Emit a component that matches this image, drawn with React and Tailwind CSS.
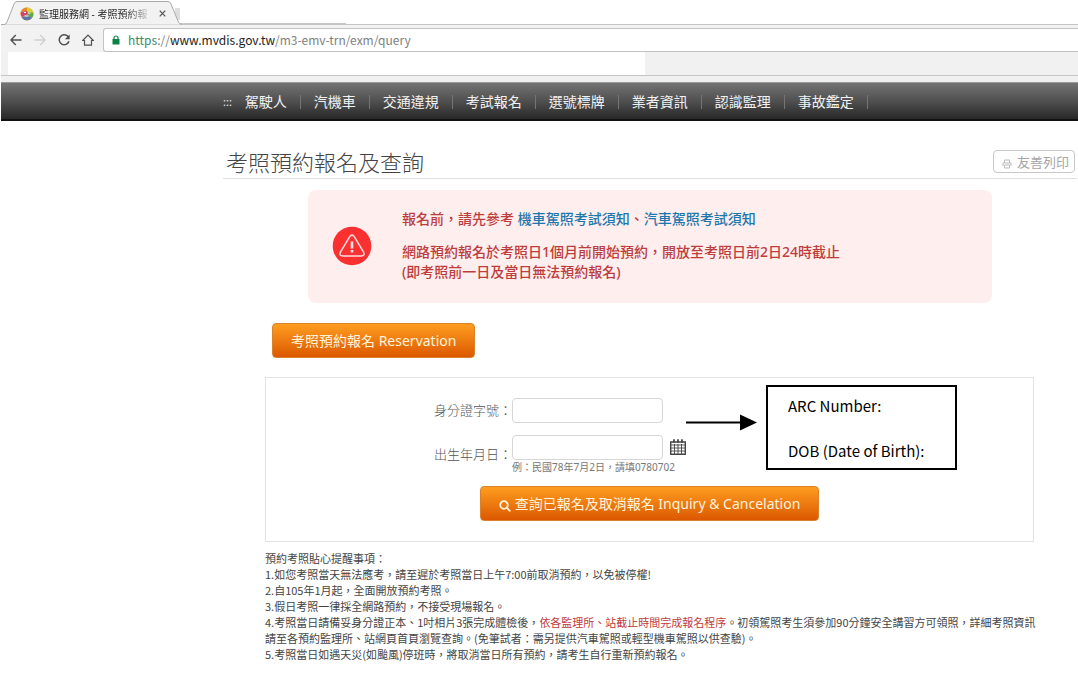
import React from "react";

const NAV = ["汽機車", "交通違規", "考試報名", "選號標牌", "業者資訊", "認識監理", "事故鑑定"];

function Favicon() {
  return (
    <svg viewBox="0 0 14 14" className="size-[14px] shrink-0" aria-hidden="true">
      <circle cx="7" cy="7" r="6.5" fill="#d9b23c" />
      <path d="M.8 5A6.5 6.5 0 0 1 7 .5v3Z" fill="#e8862f" />
      <path d="M7 .5A6.5 6.5 0 0 1 13.4 6L7 5Z" fill="#d8cf3a" />
      <path d="M.6 5.2 7 4l1 3-6 3A6.500 6.500 0 0 1 .6 5.200Z" fill="#d5406c" />
      <path d="M7 4.500 13.400 6a6.500 6.500 0 0 1-1.400 5L7 8Z" fill="#62ab4a" />
      <path d="M1.600 10.500 7 8l5 3a6.500 6.500 0 0 1-10.400-.5Z" fill="#5c74a8" />
      <path d="M4 5.500h2M8 6h2.500M4.500 9h4" stroke="#fff" strokeWidth="1" />
    </svg>
  );
}

function Toolbar() {
  return (
    <div className="flex h-[27px] items-end bg-[#f2f2f2] pl-[9px]">
      <div className="flex h-6 items-center gap-3 pr-[9px] text-[#505050]">
        <button aria-label="Back">
          <svg viewBox="0 0 12 12" className="size-3" fill="none" stroke="currentColor" strokeWidth="1.4">
            <path d="M11.500 6H1M5.800 1 .9 6l4.900 5" />
          </svg>
        </button>
        <button aria-label="Forward" className="text-[#cfcfcf]">
          <svg viewBox="0 0 12 12" className="size-3" fill="none" stroke="currentColor" strokeWidth="1.4">
            <path d="M.5 6H11M6.200 1l4.900 5-4.900 5" />
          </svg>
        </button>
        <button aria-label="Reload">
          <svg viewBox="0 0 12 12" className="size-3" fill="none" stroke="currentColor" strokeWidth="1.5">
            <path d="M10.300 2.800A5 5 0 1 0 11 7.300" />
            <path d="M11.700.4v4.800H6.900Z" fill="currentColor" stroke="none" />
          </svg>
        </button>
        <button aria-label="Home">
          <svg viewBox="0 0 12 12" className="size-3" fill="none" stroke="currentColor" strokeWidth="1.2">
            <path d="M.7 6.500 6 1.200l5.300 5.300H9.500v4.700h-7V6.500Z" />
          </svg>
        </button>
      </div>
      <div className="flex h-6 flex-1 items-center rounded-l-[3px] border border-r-0 border-[#c3c3c3] bg-white pl-2">
        <svg viewBox="0 0 8 10" className="mr-2 h-[10px] w-2" aria-hidden="true">
          <path d="M2 4.500V3a2 2 0 0 1 4 0v1.500" fill="none" stroke="#0b8043" strokeWidth="1.200" />
          <rect x=".5" y="4" width="7" height="5.500" rx=".5" fill="#0b8043" />
        </svg>
        <p className="font-['Noto_Sans_CJK_TC',sans-serif] text-[12px] leading-4 text-[#808080]">
          <span className="text-[#3d8b62]">https</span>://<span className="text-[#222]">www.mvdis.gov.tw</span>/m3-emv-trn/exm/query
        </p>
      </div>
    </div>
  );
}

function Browser() {
  return (
    <header>
      <div className="relative flex h-[25px] items-end">
        <div className="absolute bottom-0 left-0 h-px w-full bg-[#c4c4c4]" />
        <div className="absolute bottom-px left-[179px] h-px w-[166px] bg-[#c8c8c8]" />
        <div className="absolute top-2 left-[174px] h-3 w-[5px] bg-[#dedede]" />
        <div className="relative h-[25px] w-[182px]">
          <svg viewBox="0 0 182 25" className="absolute inset-0 h-[25px] w-[182px]" aria-hidden="true">
            <path d="M0 24.500h3q2 0 3-2.500L13 4q1-2.500 3-2.500h151q2 0 3 2.500l7 17q1 3.500 4 3.500Z" fill="#f2f2f2" />
            <path d="M0 24.500h3q2 0 3-2.500L13 4q1-2.500 3-2.500h151q2 0 3 2.500l7 17q1 3.500 4 3.500" fill="none" stroke="#a9a9a9" />
          </svg>
          <div className="relative flex h-[25px] items-center pt-[2px] pl-[19px]">
            <Favicon />
            <span className="ml-[5px] w-[112px] bg-gradient-to-r from-[#222] from-75% to-[#e4e4e4] bg-clip-text text-[10px] leading-4 whitespace-nowrap text-transparent">
              監理服務網 - 考照預約報
            </span>
            <button aria-label="Close tab" className="ml-2 text-[#505050]">
              <svg viewBox="0 0 7 7" className="size-[7px]" stroke="currentColor" strokeWidth="1.200">
                <path d="m.7.7 5.600 5.600M6.300.7.7 6.300" />
              </svg>
            </button>
          </div>
        </div>
      </div>
      <Toolbar />
      <div className="flex h-[23px] bg-[#f1f1f1] pl-[7px]">
        <div className="w-[637px] bg-white" />
      </div>
      <div className="h-[7px] border-t border-[#c6c6c6] bg-[#f0f0f0]" />
    </header>
  );
}

function Nav() {
  return (
    <nav className="flex h-[39px] items-center border-t border-b-2 border-t-[#9a9a9a] border-b-[#111] bg-gradient-to-b from-[#737373] via-[#505050] to-[#282828] pt-[2px] pl-[222px] text-[14px] leading-5 text-[#f2f2f2]">
      <a href="#nav" className="mr-[13px] text-[11px]">:::</a>
      <ul className="flex">
        <li className="pr-[13px]"><a href="#drivers">駕駛人</a></li>
        {NAV.map((t) => (
          <li key={t} className="flex items-center">
            <span className="mr-[13px] h-[14px] w-px bg-[#747474]" />
            <a href="#section" className="mr-[13px]">{t}</a>
          </li>
        ))}
        <li className="flex items-center"><span className="h-[14px] w-px bg-[#747474]" /></li>
      </ul>
    </nav>
  );
}

function Notice() {
  return (
    <section className="mt-[11px] mr-[85px] ml-[85px] flex h-[113px] items-center rounded-lg bg-[#ffeeee] pb-[2px] pl-6 text-[14px] leading-5 font-medium text-[#bd3d3d]">
      <svg viewBox="0 0 40 40" className="mr-[30px] size-10 shrink-0" aria-hidden="true">
        <circle cx="20" cy="20" r="19.300" fill="#fb3030" />
        <path d="M17.600 10.800q2.400-3.700 4.800 0l9.200 15.400q1.600 3.600-2.400 3.800H10.800q-4-.2-2.400-3.800Z" fill="none" stroke="#ffdede" strokeWidth="1.500" />
        <path d="M18.700 15.500h2.600v7h-2.600zM18.700 24h2.600v2.400h-2.600z" fill="#ffe6e6" />
      </svg>
      <div>
        <p>
          報名前，請先參考 <a href="#moto" className="text-[#1c78ac]">機車駕照考試須知</a>、<a href="#car" className="text-[#1c78ac]">汽車駕照考試須知</a>
        </p>
        <p className="mt-[13px]">網路預約報名於考照日1個月前開始預約，開放至考照日前2日24時截止</p>
        <p>(即考照前一日及當日無法預約報名)</p>
      </div>
    </section>
  );
}

const ORANGE =
  "flex h-[35px] items-center rounded-[4px] border border-[#d9822b] bg-gradient-to-b from-[#fd9d1f] to-[#dc5700] px-[18px] text-[14px] leading-5 text-[#fff3dc] whitespace-nowrap";
const INPUT = "h-[25px] w-[151px] rounded-[4px] border border-[#d6d6d6] bg-white px-2 text-[13px] outline-none";

function QueryForm() {
  return (
    <form className="mt-[19px] mr-[43px] ml-[42px] border border-[#e2e2e2] pt-[7px] pb-5" onSubmit={(e) => e.preventDefault()}>
      <div className="flex justify-center pl-[92px]">
        <div className="grid shrink-0 grid-cols-[78px_174px] content-start gap-y-3 pt-[13px] text-[13px] leading-5 text-[#555]">
          <label htmlFor="idno" className="self-center pb-[2px] font-light">身分證字號：</label>
          <input id="idno" className={INPUT} />
          <label htmlFor="dob" className="self-center pb-[2px] font-light">出生年月日：</label>
          <div>
            <div className="flex items-center gap-[7px]">
              <input id="dob" className={INPUT} />
              <button type="button" aria-label="Calendar" className="pb-[2px]">
                <svg viewBox="0 0 16 16" className="size-4" fill="none" stroke="#444">
                  <path d="M.7 3h14.600v12.300H.7z" strokeWidth="1.400" />
                  <path d="M1 6h14M1 9h14M1 12h14M4.500 5v10M8 5v10M11.500 5v10" strokeWidth=".9" />
                  <path d="M4 .3v3.500M8 .3v3.500M12 .3v3.500" strokeWidth="1.700" />
                </svg>
              </button>
            </div>
            <p className="text-[10px] leading-[14px] whitespace-nowrap text-[#777]">例：民國78年7月2日，請填0780702</p>
          </div>
        </div>
        <svg viewBox="0 0 72 18" className="mt-7 mr-2 h-[18px] w-[72px] shrink-0" aria-hidden="true">
          <path d="M0 9.500h56" stroke="#000" strokeWidth="2" />
          <path d="M54 1.500 71 9.500l-17 8Z" />
        </svg>
        <div className="h-[85px] w-[191px] shrink-0 border-2 border-black bg-white pt-2 pl-5 font-['Noto_Sans_CJK_TC',sans-serif] text-[15px] leading-[22px] text-black">
          <p>ARC Number:</p>
          <p className="mt-[23px]">DOB (Date of Birth):</p>
        </div>
      </div>
      <div className="mt-3 flex justify-center">
        <button className={ORANGE}>
          <svg viewBox="0 0 12 12" className="mt-1 mr-1 size-3" fill="none" stroke="currentColor" strokeWidth="1.800">
            <circle cx="5" cy="5" r="3.800" />
            <path d="m7.800 7.800 3.500 3.500" />
          </svg>
          查詢已報名及取消報名 Inquiry &amp; Cancelation
        </button>
      </div>
    </form>
  );
}

export default function App() {
  return (
    <div lang="zh-Hant" className="min-h-screen bg-white pl-px font-['Noto_Sans','Noto_Sans_CJK_TC',sans-serif]">
      <Browser />
      <Nav />
      <main className="pt-7 pr-px pl-[222px]">
        <div className="flex h-[30px] items-start justify-between border-b border-[#dedede] pr-[2px] pl-[3px]">
          <h1 className="text-[22px] leading-[26px] font-light text-[#444]">考照預約報名及查詢</h1>
          <button className="mt-px flex h-[23px] items-center rounded-[4px] border border-[#c8c8c8] pr-[5px] pl-2 text-[13px] leading-5 text-[#a5a5a5]">
            <svg viewBox="0 0 10 10" className="mt-1 mr-[5px] size-[10px]" fill="none" stroke="#bbb">
              <path d="M2.500 4V1h5v3M1 7V4h8v3M2.500 6h5v3h-5z" />
            </svg>
            友善列印
          </button>
        </div>
        <Notice />
        <div className="mt-5 ml-[49px]">
          <button className={ORANGE}>考照預約報名 Reservation</button>
        </div>
        <QueryForm />
        <section className="mt-2 mr-[41px] ml-[42px] font-['Noto_Sans_CJK_TC',sans-serif] text-[11px] leading-4 text-[#444]">
          <h2>預約考照貼心提醒事項：</h2>
          <p>1.如您考照當天無法應考，請至遲於考照當日上午7:00前取消預約，以免被停權!</p>
          <p>2.自105年1月起，全面開放預約考照。</p>
          <p>3.假日考照一律採全網路預約，不接受現場報名。</p>
          <p>
            4.考照當日請備妥身分證正本、1吋相片3張完成體檢後，<span className="text-[#c23b3b]">依各監理所、站截止時間完成報名程序</span>。初領駕照考生須參加90分鐘安全講習方可領照，詳細考照資訊請至各預約監理所、站網頁首頁瀏覽查詢。(免筆試者：需另提供汽車駕照或輕型機車駕照以供查驗)。
          </p>
          <p>5.考照當日如遇天災(如颱風)停班時，將取消當日所有預約，請考生自行重新預約報名。</p>
        </section>
      </main>
    </div>
  );
}
